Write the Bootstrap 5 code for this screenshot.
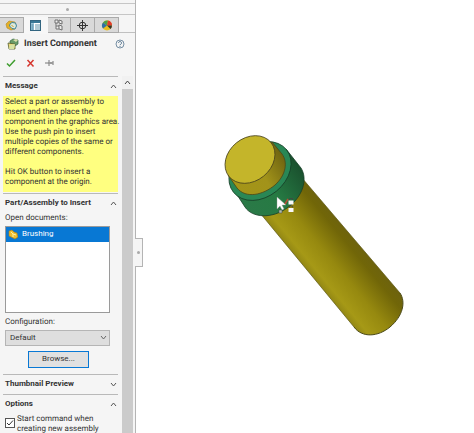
<!DOCTYPE html>
<html lang="en">
<head>
<meta charset="utf-8">
<meta name="viewport" content="width=device-width, initial-scale=1">
<title>Insert Component</title>
<link href="https://cdn.jsdelivr.net/npm/bootstrap@5.3.0/dist/css/bootstrap.min.css" rel="stylesheet">
<style>
body{font-family:Roboto,"Open Sans",sans-serif;font-size:8px;line-height:10px;color:#333;background:#fff;text-rendering:geometricPrecision}
svg{display:block;flex:none}
button{font:inherit;color:inherit}
.side{flex:0 0 136px;background:#f5f5f5;border-right:1px solid #b4b4b4}
.strip{height:15px;padding-top:3px}
.strip>div{border:solid #c6c6c6;border-width:1px 0;height:12px}
.dot{width:3px;height:3px;border-radius:50%;background:#aaa}
.tabs{height:18px;padding:2px 16px 0 0;border-bottom:1px solid #c0c0c0}
.tabs button{flex:1;height:16px;background:#d9d9d9;border:1px solid #aaa;border-left:0;padding:0}
.tabs button.active{background:#f7f7f7;border-color:#f7f7f7;height:17px}
.title-row{height:22px;padding:0 10px 0 7px}
.title-row h1{font-size:9px;line-height:12px;font-weight:700;margin:0 0 0 5px}
.acts{height:21px;padding:0 0 4px 6px;gap:10px}
.plain{background:none;border:0;padding:0}
.pm{padding:0 4px 0 3px;width:122px}
.sec{border-top:1px solid #b9b9b9}
.sec-head{height:19px;padding:0 1px 0 2px;width:100%;font-weight:700}
.sec-head span{font-size:8px}
.note{background:#ffff80;padding:1px 0 0 2px;height:96px;margin:0 0 1px;white-space:nowrap}
.note p{margin:0 0 10px}
.lbl{padding-left:2px;height:13px;line-height:10px;display:block;margin:0}
.docs{margin:0 8px 4px 2px;height:87px;border:1px solid #9a9a9a;background:#fff}
.docs button{background:#0878d4;color:#fff;height:15px;border:0;padding:0 2px;gap:4px}
.pick{margin:0 8px 5px 2px}
.pick select{height:16px;width:100%;border:1px solid #b5b5b5;background:#dedede;border-radius:0;appearance:none;font-size:8px;line-height:10px;padding:0 4px;color:#333}
.pick svg{position:absolute;right:3px;top:5px}
.browse{width:61px;height:17px;background:#e1e1e1;border:1px solid #0878d4;padding:0;margin:0 0 6px 25px;display:block}
.opt{gap:2px;padding-left:2px;white-space:nowrap}
.opt input{width:10px;height:10px;margin:4px 0 0;border:1px solid #555;appearance:none;background:#fff;flex:none}
.opt input:checked{background:#fff url("data:image/svg+xml,%3Csvg xmlns='http://www.w3.org/2000/svg' viewBox='0 0 8 8'%3E%3Cpath d='M1 4l2 2 4-4.5' fill='none' stroke='%23333'/%3E%3C/svg%3E") center/8px}
.bar{width:11px;background:#cbcbcb}
.bar button{height:13px;background:#f1f1f1}
.fly{position:absolute;left:100%;top:238px;width:8px;height:29px;background:#f5f5f5;border:1px solid #b4b4b4;border-left:0;padding:0}
.view svg{width:339px;height:433px}
</style>
<script src="https://cdn.jsdelivr.net/npm/bootstrap@5.3.0/dist/js/bootstrap.bundle.min.js"></script>
</head>
<body>
<div class="d-flex vh-100 overflow-hidden">
<aside class="side d-flex flex-column position-relative">
  <div class="strip"><div class="d-flex align-items-center justify-content-center"><span class="dot"></span></div></div>
  <nav class="tabs d-flex" aria-label="Manager tabs">
    <button class="d-flex align-items-center justify-content-center" aria-label="Feature tree"><svg width="12" height="11" viewBox="0 0 12 11"><path d="M1 4l3-3 6 1 1 3-1 4-4 1-4-2z" fill="#e3b02a" stroke="#b08625" stroke-width=".6"/><path d="M5 4l2-1.500 3.500.5 1 3L10 9 7 8.500 4.500 6z" fill="#dfeadb" stroke="#3f87a0" stroke-width="1"/><path d="M6.500 5l2 2" stroke="#c99a24"/></svg></button>
    <button class="active d-flex align-items-center justify-content-center" aria-label="Property manager"><svg width="11" height="11" viewBox="0 0 11 11"><rect x=".5" y=".5" width="10" height="10" fill="#fff" stroke="#326580"/><path d="M1 1h9v2H1z" fill="#397896"/><path d="M1 3h3v7H1z" fill="#9ac4d8"/><path d="M1.500 5h2m-2 2h2m-2 2h2M5 5h5M5 7h5M5 9h5" stroke="#397896" stroke-width=".8"/></svg></button>
    <button class="d-flex align-items-center justify-content-center" aria-label="Configurations"><svg width="10" height="12" viewBox="0 0 10 12" fill="#eee" stroke="#666" stroke-width=".9"><path d="M1 1h3v3H1zM2 4v6h3M2 7h3"/><path d="M5 1l3 1v3L5 4zM5 6l3 1v4L5 10z"/></svg></button>
    <button class="d-flex align-items-center justify-content-center" aria-label="Dimensions"><svg width="11" height="11" viewBox="0 0 11 11" fill="none" stroke="#333"><circle cx="5.500" cy="5.500" r="3.300"/><path d="M5.500 0v11M0 5.500h11"/></svg></button>
    <button class="d-flex align-items-center justify-content-center" aria-label="Appearances"><svg width="12" height="11" viewBox="0 0 12 11"><circle cx="6" cy="5.500" r="5" fill="#eabf20"/><path d="M6 5.500L2 2.500a5 5 0 0 1 5-2z" fill="#49a24b"/><path d="M6 5.500L7 .5a5 5 0 0 1 4 5z" fill="#e23b2d"/><path d="M6 5.500L2 2.500A5 5 0 0 0 2 8.500z" fill="#2d70a7"/><path d="M6 5.500h5a5 5 0 0 1-1.500 3.500z" fill="#333"/></svg></button>
  </nav>
  <div class="title-row d-flex align-items-center">
    <svg width="12" height="12" viewBox="0 0 12 12"><path d="M3 3l3-2 5 1v4L8 8 3 6z" fill="#699b69" stroke="#386947" stroke-width=".7"/><path d="M6 2l3-1 2 1-2 2z" fill="#d9ddad"/><path d="M1 5l7 1v5H2z" fill="#f0d878" stroke="#53602f" stroke-width=".8"/><path d="M3 7l5-1-1 5H2z" fill="#d7e3a5"/></svg>
    <h1>Insert Component</h1>
    <button class="plain ms-auto" aria-label="Help"><svg width="10" height="10" viewBox="0 0 10 10" fill="none" stroke="#55758f"><circle cx="5" cy="5" r="4" stroke-width=".8"/><path d="M3.500 4a1.500 1.500 0 1 1 2.400 1.200Q5 5.500 5 6.200M5 7v1"/></svg></button>
  </div>
  <div class="acts d-flex align-items-center">
    <button class="plain" aria-label="OK"><svg width="10" height="10" viewBox="0 0 10 10"><path d="M1 5.500L3.500 8 9 2" fill="none" stroke="#3e9d2e" stroke-width="1.500"/></svg></button>
    <button class="plain" aria-label="Cancel"><svg width="9" height="10" viewBox="0 0 9 10"><path d="M1.500 2l6 6.500M7.500 2l-6 6.500" stroke="#d5352d" stroke-width="1.500"/></svg></button>
    <button class="plain" aria-label="Keep visible"><svg width="9" height="8" viewBox="0 0 9 8"><path d="M0 4h4M4 1v6M8 2v4" stroke="#777"/><path d="M4 3h4v2H4z" fill="#999"/></svg></button>
  </div>
  <div class="d-flex flex-fill overflow-hidden">
    <div class="pm">
      <section class="sec">
        <button class="plain sec-head d-flex align-items-center justify-content-between"><span>Message</span><svg width="7" height="5" viewBox="0 0 7 5"><path d="M1 4l2.500-3L6 4" fill="none" stroke="#555"/></svg></button>
        <div class="note"><p>Select a part or assembly to<br>insert and then place the<br>component in the graphics area.<br>Use the push pin to insert<br>multiple copies of the same or<br>different components.</p><p>Hit OK button to insert a<br>component at the origin.</p></div>
      </section>
      <section class="sec">
        <button class="plain sec-head d-flex align-items-center justify-content-between"><span>Part/Assembly to Insert</span><svg width="7" height="5" viewBox="0 0 7 5"><path d="M1 4l2.500-3L6 4" fill="none" stroke="#555"/></svg></button>
        <span class="lbl">Open documents:</span>
        <div class="docs"><button class="w-100 d-flex align-items-center"><svg width="10" height="11" viewBox="0 0 10 11"><path d="M1 2l3-1 2 2 3 1 1 4-3 2-4-2-2-1z" fill="#efbd2e" stroke="#a67b18" stroke-width=".6"/><path d="M3 3l2 2 3 1M5 5v3" stroke="#fff1a0" fill="none"/></svg>Brushing</button></div>
        <label class="lbl" for="config">Configuration:</label>
        <div class="pick position-relative"><select id="config"><option>Default</option></select><svg width="7" height="5" viewBox="0 0 7 5"><path d="M1 1l2.500 3L6 1" fill="none" stroke="#666"/></svg></div>
        <button class="browse">Browse...</button>
      </section>
      <section class="sec">
        <button class="plain sec-head d-flex align-items-center justify-content-between"><span>Thumbnail Preview</span><svg width="7" height="5" viewBox="0 0 7 5"><path d="M1 1l2.500 3L6 1" fill="none" stroke="#555"/></svg></button>
      </section>
      <section class="sec">
        <button class="plain sec-head d-flex align-items-center justify-content-between"><span>Options</span><svg width="7" height="5" viewBox="0 0 7 5"><path d="M1 4l2.500-3L6 4" fill="none" stroke="#555"/></svg></button>
        <div class="opt d-flex"><input type="checkbox" id="start" checked><label for="start">Start command when<br>creating new assembly</label></div>
      </section>
    </div>
    <div class="bar"><button class="plain w-100 d-flex justify-content-center align-items-center" aria-label="Scroll up"><svg width="7" height="5" viewBox="0 0 7 5"><path d="M1 4l2.500-3L6 4" fill="none" stroke="#444"/></svg></button></div>
  </div>
  <button class="fly d-flex align-items-center justify-content-center" aria-label="Collapse panel"><span class="dot"></span></button>
</aside>
<main class="view flex-fill overflow-hidden">
  <svg viewBox="136 0 339 433" role="img" aria-label="Yellow pin with a green bushing">
    <defs>
      <linearGradient id="rod" gradientUnits="userSpaceOnUse" x1="302" y1="265" x2="352" y2="224"><stop offset="0" stop-color="#918614"/><stop offset=".12" stop-color="#a69916"/><stop offset=".4" stop-color="#96890f"/><stop offset=".75" stop-color="#716608"/><stop offset="1" stop-color="#6a6012"/></linearGradient>
      <linearGradient id="cap" gradientUnits="userSpaceOnUse" x1="236" y1="185" x2="284" y2="155"><stop offset="0" stop-color="#a49518"/><stop offset=".5" stop-color="#a2931a"/><stop offset="1" stop-color="#6d6210"/></linearGradient>
      <linearGradient id="ring" gradientUnits="userSpaceOnUse" x1="236" y1="205" x2="300" y2="160"><stop offset="0" stop-color="#2b7948"/><stop offset=".5" stop-color="#267a43"/><stop offset="1" stop-color="#194c2c"/></linearGradient>
    </defs>
    <path d="M260 213L354 327C362 338 378 337 390 327C403 316 406 302 400 293L302 178Z" fill="url(#rod)"/>
    <path d="M354 327C362 338 378 337 390 327C403 316 406 302 400 293" fill="none" stroke="#4b4a18"/>
    <path d="M354 327L260 213M400 293L302 178" fill="none" stroke="#5c5613" stroke-width=".7"/>
    <path d="M232 187L245 207C252 218 272 219 287 208C303 197 308 179 301 168L286 149Z" fill="url(#ring)" stroke="#173f27" stroke-width=".8"/>
    <ellipse cx="260" cy="171" rx="34" ry="26" transform="rotate(-39 260 171)" fill="#298755" stroke="#173f27" stroke-width=".8"/>
    <path d="M228 175L237 188C246 199 263 195 275 185C286 175 288 162 282 154L272 142Z" fill="url(#cap)" stroke="#4e4717" stroke-width=".8"/>
    <ellipse cx="250" cy="159.500" rx="27" ry="21.500" transform="rotate(-39 250 159.500)" fill="#c4b52a" stroke="#49431b" stroke-width=".8"/>
    <path d="M277 197v12l3-3 2 4 2-1-2-4h4z" fill="#fff" stroke="#999" stroke-width=".4"/>
    <path d="M285 204l3-5" stroke="#b44d35" stroke-width="1.500"/>
    <g fill="#f8f8f8"><path d="M288.500 200.500h5v4h-5zM288.500 208h5v4h-5z"/><path d="M289.500 200v-1.500h3v1.500M289.500 207.500v-1.500h3v1.500" fill="none" stroke="#444" stroke-width=".8"/><path d="M279 210h3v3h-3z" fill="#aebcae" stroke="#444" stroke-width=".5"/></g>
  </svg>
</main>
</div>
</body>
</html>
